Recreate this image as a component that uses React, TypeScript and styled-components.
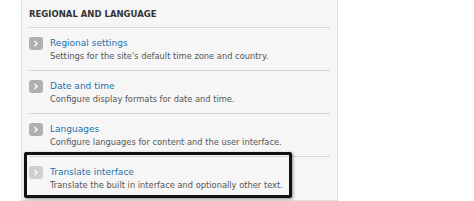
import React from 'react';
import styled, {createGlobalStyle} from 'styled-components';

const GlobalStyle = createGlobalStyle`
    html, body {
        margin: 0;
        padding: 0;
        background: #fff;
    }
    body {
        font-family: "DejaVu Sans", Verdana, sans-serif;
    }
`

const Page = styled.div`
    width: 474px;
    height: 201px;
    padding-left: 21px;
    box-sizing: border-box;
    position: relative;
    overflow: hidden;
`

const Panel = styled.div`
    width: 317px;
    height: 201px;
    box-sizing: border-box;
    background: #f6f6f6;
    border: 1px solid #e2e2e2;
    border-top: none;
    padding: 0 7px;
`

const Heading = styled.h3`
    margin: 0;
    height: 28px;
    box-sizing: border-box;
    padding-top: 9px;
    border-bottom: 1px solid #d6d6d6;
    font-size: 8.5px;
    font-weight: bold;
    color: #333;
    text-transform: uppercase;
    line-height: 10px;
`

const Row = styled.div`
    display: flex;
    gap: 7px;
    height: 43px;
    box-sizing: border-box;
    padding-top: 9px;
    border-bottom: 1px solid #d6d6d6;

    &:last-child {
        border-bottom: none;
    }
`

const Arrow = styled.span<{ $faded?: boolean }>`
    flex: none;
    width: 14px;
    height: 13px;
    border-radius: 3px;
    background: ${({$faded}) => ($faded ? '#cfcfcf' : '#b0b0b0')};
    display: flex;
    align-items: center;
    justify-content: center;
`

const Text = styled.div`
    display: flex;
    flex-direction: column;
`

const Title = styled.a`
    font-size: 9px;
    line-height: 12px;
    color: #2470ad;
    text-decoration: none;
`

const Desc = styled.div`
    margin-top: 2px;
    font-size: 8.3px;
    line-height: 10px;
    color: #555;
`

const Highlight = styled.div`
    position: absolute;
    left: 24px;
    top: 152px;
    width: 268px;
    height: 46px;
    box-sizing: border-box;
    border: 3px solid #111;
    border-radius: 2px;
    box-shadow: 1px 1px 3px rgba(0, 0, 0, 0.45);
    pointer-events: none;
`

const ITEMS = [
    {title: 'Regional settings', desc: "Settings for the site's default time zone and country."},
    {title: 'Date and time', desc: 'Configure display formats for date and time.'},
    {title: 'Languages', desc: 'Configure languages for content and the user interface.'},
    {title: 'Translate interface', desc: 'Translate the built in interface and optionally other text.', faded: true},
]

const Chevron = () => (
    <svg width="6" height="7" viewBox="0 0 6 7">
        <path d="M1.5 1 L4 3.5 L1.5 6" stroke="#fff" strokeWidth="1.4" fill="none"/>
    </svg>
)

const App: React.FC = () => (
    <>
        <GlobalStyle/>
        <Page>
            <Panel>
                <Heading>Regional and language</Heading>
                {ITEMS.map(item => (
                    <Row key={item.title}>
                        <Arrow $faded={item.faded}><Chevron/></Arrow>
                        <Text>
                            <Title href="#">{item.title}</Title>
                            <Desc>{item.desc}</Desc>
                        </Text>
                    </Row>
                ))}
            </Panel>
            <Highlight/>
        </Page>
    </>
)

export default App;
